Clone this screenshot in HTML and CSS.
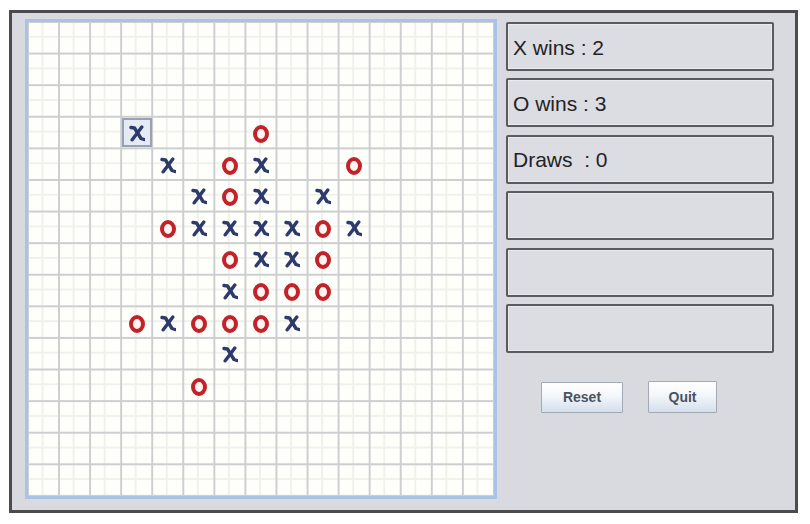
FILE: index.html
```html
<!DOCTYPE html>
<html>
<head>
<meta charset="utf-8">
<link rel="stylesheet" href="styles.css">
</head>
<body>
<svg class="defs" width="0" height="0">
  <symbol id="xmark" viewBox="0 0 16 17">
    <path d="M2 2.5 L5.5 3 L12 13.5 L15 14.5" fill="none" stroke="#2c3a6c" stroke-width="3.4" stroke-linecap="round" stroke-linejoin="round"/>
    <path d="M12.8 2 L8 8.5 L3.2 14.8" fill="none" stroke="#2c3a6c" stroke-width="3.4" stroke-linecap="round" stroke-linejoin="round"/>
  </symbol>
</svg>
<div class="frame">
  <div class="board">
    <div class="cell r3 c3 last"><svg class="x"><use href="#xmark"/></svg></div>
    <div class="cell r3 c7"><span class="o"></span></div>

    <div class="cell r4 c4"><svg class="x"><use href="#xmark"/></svg></div>
    <div class="cell r4 c6"><span class="o"></span></div>
    <div class="cell r4 c7"><svg class="x"><use href="#xmark"/></svg></div>
    <div class="cell r4 c10"><span class="o"></span></div>

    <div class="cell r5 c5"><svg class="x"><use href="#xmark"/></svg></div>
    <div class="cell r5 c6"><span class="o"></span></div>
    <div class="cell r5 c7"><svg class="x"><use href="#xmark"/></svg></div>
    <div class="cell r5 c9"><svg class="x"><use href="#xmark"/></svg></div>

    <div class="cell r6 c4"><span class="o"></span></div>
    <div class="cell r6 c5"><svg class="x"><use href="#xmark"/></svg></div>
    <div class="cell r6 c6"><svg class="x"><use href="#xmark"/></svg></div>
    <div class="cell r6 c7"><svg class="x"><use href="#xmark"/></svg></div>
    <div class="cell r6 c8"><svg class="x"><use href="#xmark"/></svg></div>
    <div class="cell r6 c9"><span class="o"></span></div>
    <div class="cell r6 c10"><svg class="x"><use href="#xmark"/></svg></div>

    <div class="cell r7 c6"><span class="o"></span></div>
    <div class="cell r7 c7"><svg class="x"><use href="#xmark"/></svg></div>
    <div class="cell r7 c8"><svg class="x"><use href="#xmark"/></svg></div>
    <div class="cell r7 c9"><span class="o"></span></div>

    <div class="cell r8 c6"><svg class="x"><use href="#xmark"/></svg></div>
    <div class="cell r8 c7"><span class="o"></span></div>
    <div class="cell r8 c8"><span class="o"></span></div>
    <div class="cell r8 c9"><span class="o"></span></div>

    <div class="cell r9 c3"><span class="o"></span></div>
    <div class="cell r9 c4"><svg class="x"><use href="#xmark"/></svg></div>
    <div class="cell r9 c5"><span class="o"></span></div>
    <div class="cell r9 c6"><span class="o"></span></div>
    <div class="cell r9 c7"><span class="o"></span></div>
    <div class="cell r9 c8"><svg class="x"><use href="#xmark"/></svg></div>

    <div class="cell r10 c6"><svg class="x"><use href="#xmark"/></svg></div>

    <div class="cell r11 c5"><span class="o"></span></div>
  </div>
  <div class="side">
    <div class="field">X wins : 2</div>
    <div class="field">O wins : 3</div>
    <div class="field">Draws&nbsp; : 0</div>
    <div class="field"></div>
    <div class="field"></div>
    <div class="field"></div>
    <div class="buttons">
      <button class="btn reset">Reset</button>
      <button class="btn quit">Quit</button>
    </div>
  </div>
</div>
</body>
</html>
```

FILE: styles.css
```css
html, body {
  margin: 0;
  padding: 0;
  background: #ffffff;
}

.defs {
  position: absolute;
  width: 0;
  height: 0;
}

.frame {
  margin: 10px 0 0 9px;
  width: 789px;
  height: 503px;
  box-sizing: border-box;
  border: 3px solid #4c4c4e;
  background: #d9dadf;
  display: flex;
  align-items: flex-start;
  gap: 9px;
  padding: 6px 0 0 13px;
  font-family: "Liberation Sans", Arial, sans-serif;
}

.board {
  width: 472px;
  height: 480px;
  box-sizing: border-box;
  border: 3px solid #a9c3e8;
  background-color: #fefefb;
  background-image:
    linear-gradient(to right, #cdcecf 2px, transparent 2px),
    linear-gradient(to bottom, #cdcecf 2px, transparent 2px),
    linear-gradient(to right, transparent calc(50% - 0.5px), #f1f1ec calc(50% - 0.5px), #f1f1ec calc(50% + 0.5px), transparent calc(50% + 0.5px)),
    linear-gradient(to bottom, transparent calc(50% - 0.5px), #f1f1ec calc(50% - 0.5px), #f1f1ec calc(50% + 0.5px), transparent calc(50% + 0.5px));
  background-size: calc(100% / 15) calc(100% / 15);
  background-position: -1px -1px;
  display: grid;
  grid-template-columns: repeat(15, 1fr);
  grid-template-rows: repeat(15, 1fr);
}

.cell {
  display: flex;
  align-items: center;
  justify-content: center;
}

.cell.last {
  margin: 1px 0 1px 1px;
  border: 2px solid #9aa1b0;
  background: #e6eaf2;
}

.x {
  width: 16px;
  height: 17px;
  margin-top: 2px;
}

.o {
  width: 8px;
  height: 10px;
  border: 4.5px solid #c2232a;
  border-radius: 50%;
  background: #fff4f0;
  margin-top: 3px;
}

.r3 { grid-row: 4; }
.r4 { grid-row: 5; }
.r5 { grid-row: 6; }
.r6 { grid-row: 7; }
.r7 { grid-row: 8; }
.r8 { grid-row: 9; }
.r9 { grid-row: 10; }
.r10 { grid-row: 11; }
.r11 { grid-row: 12; }

.c3 { grid-column: 4; }
.c4 { grid-column: 5; }
.c5 { grid-column: 6; }
.c6 { grid-column: 7; }
.c7 { grid-column: 8; }
.c8 { grid-column: 9; }
.c9 { grid-column: 10; }
.c10 { grid-column: 11; }

.side {
  width: 268px;
  padding-top: 3px;
  display: flex;
  flex-direction: column;
  gap: 7.4px;
}

.field {
  height: 49px;
  box-sizing: border-box;
  border: 2px solid #5a5b5f;
  border-radius: 2px;
  background: #dcdde2;
  box-shadow: inset 0 0 0 1px #e9eaee;
  display: flex;
  align-items: center;
  padding: 2px 0 0 5px;
  font-size: 21px;
  color: #232326;
  white-space: pre;
}

.buttons {
  display: flex;
  align-items: center;
  gap: 25px;
  margin: 21px 0 0 35px;
}

.btn {
  height: 31px;
  box-sizing: border-box;
  border: 1px solid #a4aab3;
  border-radius: 1px;
  background: linear-gradient(to bottom, #ffffff 0%, #f3f6fa 45%, #d4dfec 100%);
  font-family: "Liberation Sans", Arial, sans-serif;
  font-weight: bold;
  font-size: 14px;
  color: #4a5263;
  padding: 0;
}

.reset { width: 82px; }
.quit { width: 69px; height: 32px; }
```
